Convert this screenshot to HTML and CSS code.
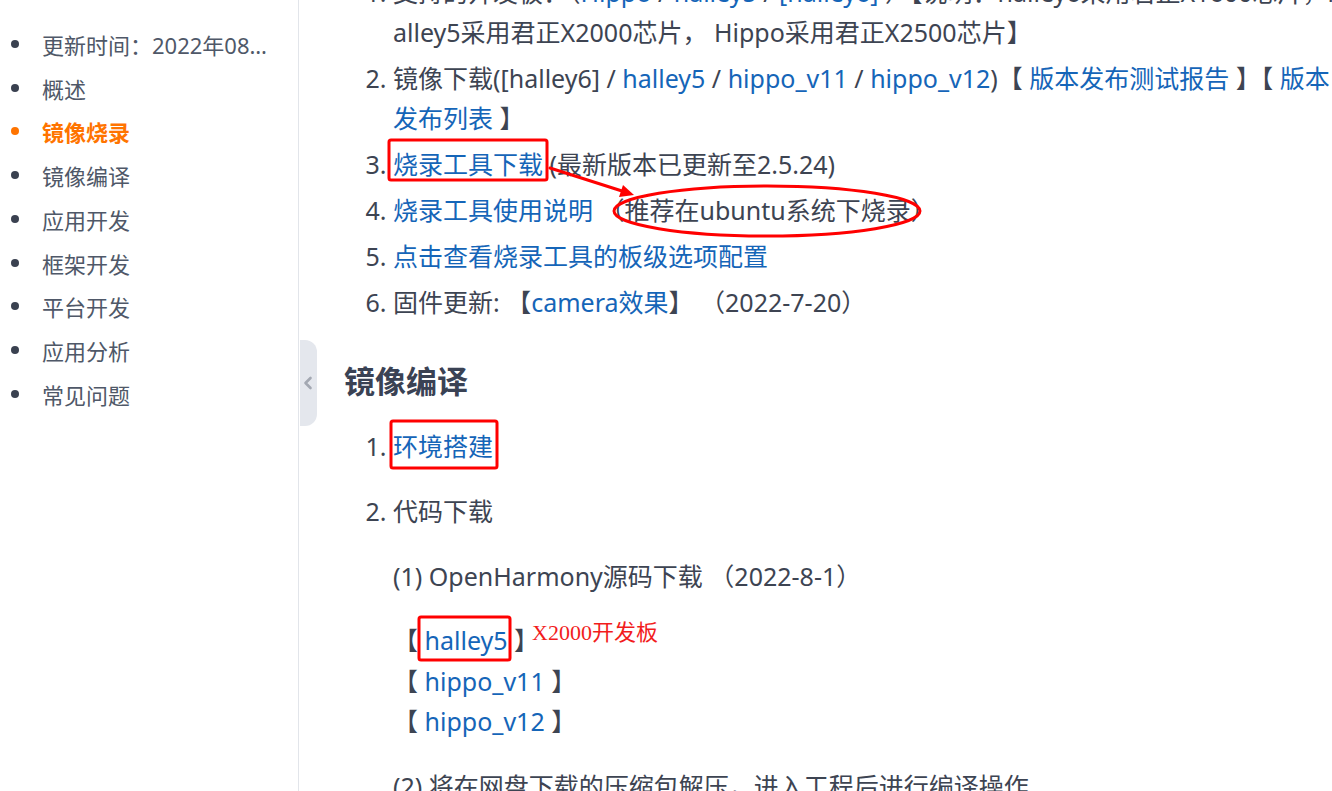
FILE: index.html
```html
<!DOCTYPE html>
<html lang="zh-CN">
<head>
<meta charset="utf-8">
<title>镜像烧录</title>
<link rel="stylesheet" href="styles.css">
</head>
<body>
<div class="page">
  <aside class="sidebar">
    <ul class="toc">
      <li class="toc-item"><span class="toc-text">更新时间：2022年08月01日</span></li>
      <li class="toc-item"><span class="toc-text">概述</span></li>
      <li class="toc-item active"><span class="toc-text">镜像烧录</span></li>
      <li class="toc-item"><span class="toc-text">镜像编译</span></li>
      <li class="toc-item"><span class="toc-text">应用开发</span></li>
      <li class="toc-item"><span class="toc-text">框架开发</span></li>
      <li class="toc-item"><span class="toc-text">平台开发</span></li>
      <li class="toc-item"><span class="toc-text">应用分析</span></li>
      <li class="toc-item"><span class="toc-text">常见问题</span></li>
    </ul>
    <div class="collapse-tab">
      <svg class="chev" width="10" height="14" viewBox="0 0 10 14"><path d="M7.5 2 L2.5 7 L7.5 12" fill="none" stroke="#a3a8b2" stroke-width="2.6" stroke-linecap="round" stroke-linejoin="round"/></svg>
    </div>
  </aside>
  <main class="main">
    <div class="doc">
      <ol class="list">
        <li>支持的开发板：（<a class="lnk">Hippo</a> / <a class="lnk">halley5</a> / <a class="lnk">[halley6]</a> ）【说明：halley6采用君正X1600芯片，h<br>alley5采用君正X2000芯片， Hippo采用君正X2500芯片】</li>
        <li>镜像下载([halley6] / <a class="lnk">halley5</a> / <a class="lnk">hippo_v11</a> / <a class="lnk">hippo_v12</a>)【 <a class="lnk">版本发布测试报告</a> 】【 <a class="lnk">版本</a><br><a class="lnk">发布列表</a> 】</li>
        <li><a class="lnk">烧录工具下载</a> (最新版本已更新至2.5.24)</li>
        <li><a class="lnk">烧录工具使用说明</a> （推荐在ubuntu系统下烧录）</li>
        <li><a class="lnk">点击查看烧录工具的板级选项配置</a></li>
        <li>固件更新: 【<a class="lnk">camera效果</a>】 （2022-7-20）</li>
      </ol>
      <h2 class="heading">镜像编译</h2>
      <ol class="list loose">
        <li><p><a class="lnk">环境搭建</a></p></li>
        <li>
          <p>代码下载</p>
          <p>(1) OpenHarmony源码下载 （2022-8-1）</p>
          <p class="links">【 <a class="lnk">halley5</a> 】<br>【 <a class="lnk">hippo_v11</a> 】<br>【 <a class="lnk">hippo_v12</a> 】</p>
          <p>(2) 将在网盘下载的压缩包解压，进入工程后进行编译操作</p>
        </li>
      </ol>
    </div>
  </main>
</div>
<svg class="marks" width="1332" height="791" viewBox="0 0 1332 791">
  <rect x="389" y="140" width="158" height="40" rx="2" fill="none" stroke="#f00" stroke-width="3"/>
  <line x1="550" y1="168" x2="622" y2="191" stroke="#f00" stroke-width="3" stroke-linecap="round"/>
  <polygon points="634,195 619,197 623,185" fill="#f00"/>
  <ellipse cx="767" cy="211" rx="153" ry="25" fill="none" stroke="#f00" stroke-width="3"/>
  <rect x="391" y="421" width="106" height="47" rx="2" fill="none" stroke="#f00" stroke-width="3"/>
  <rect x="419" y="617" width="91" height="43" rx="2" fill="none" stroke="#f00" stroke-width="3"/>
</svg>
<span class="note">X2000开发板</span>
</body>
</html>
```
FILE: styles.css
```css
html, body {
  margin: 0;
  padding: 0;
  background: #ffffff;
}
body {
  position: relative;
  width: 1332px;
  height: 791px;
  overflow: hidden;
  font-family: "Noto Sans", "Noto Sans CJK SC", sans-serif;
  color: #3d4452;
}
.page {
  display: flex;
  height: 791px;
}
.sidebar {
  position: relative;
  flex: 0 0 299px;
  border-right: 1px solid #e2e5ea;
  box-sizing: border-box;
  width: 300px;
}
.toc {
  list-style: none;
  margin: 0;
  padding: 22px 0 0 11px;
}
.toc-item {
  display: flex;
  align-items: center;
  height: 43.75px;
  font-size: 22px;
  color: #4f5868;
}
.toc-item::before {
  content: "";
  flex: 0 0 8px;
  width: 8px;
  height: 8px;
  border-radius: 50%;
  background: #3a4150;
  margin-right: 23px;
}
.toc-text {
  max-width: 232px;
  white-space: nowrap;
  overflow: hidden;
  text-overflow: ellipsis;
}
.toc-item.active {
  color: #ff7400;
  font-weight: 700;
}
.toc-item.active::before {
  background: #ff7400;
}
.collapse-tab {
  position: absolute;
  left: 300px;
  top: 340px;
  width: 17px;
  height: 86px;
  background: #e4e7ed;
  border-radius: 0 12px 12px 0;
  display: flex;
  align-items: center;
  justify-content: center;
}
.chev {
  display: block;
  margin-left: -2px;
}
.main {
  flex: 1;
  overflow: hidden;
  padding-left: 45px;
}
.doc {
  margin-top: -28px;
  font-size: 25px;
  line-height: 40px;
}
.list {
  margin: 0;
  padding-left: 49px;
  white-space: nowrap;
}
.list > li + li {
  margin-top: 6px;
}
.lnk {
  color: #1565b8;
  text-decoration: none;
}
.heading {
  margin: 36px 0 22px;
  font-size: 31px;
  line-height: 46px;
  font-weight: 700;
  color: #3a4254;
}
.loose > li + li {
  margin-top: 25px;
}
.loose p {
  margin: 0;
}
.loose p + p {
  margin-top: 24.5px;
}
.links {
  line-height: 40.5px;
}
.marks {
  position: absolute;
  left: 0;
  top: 0;
  pointer-events: none;
}
.note {
  position: absolute;
  left: 532px;
  top: 618px;
  font-family: "Liberation Serif", "Noto Sans CJK SC", serif;
  font-size: 22px;
  line-height: 30px;
  color: #f21c1c;
  white-space: nowrap;
}
```
